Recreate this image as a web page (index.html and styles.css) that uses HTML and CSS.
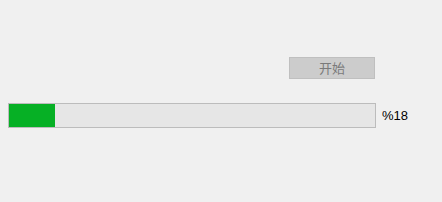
FILE: index.html
```html
<!DOCTYPE html>
<html lang="zh-CN">
<head>
    <meta charset="UTF-8">
    <title>进度</title>
    <link rel="stylesheet" href="styles.css">
</head>
<body>
    <div class="window">
        <div class="button-row">
            <button class="start-btn" disabled>开始</button>
        </div>
        <div class="progress-row">
            <div class="progress-track">
                <div class="progress-fill" style="width: 46px"></div>
            </div>
            <span class="progress-label">%18</span>
        </div>
    </div>
</body>
</html>
```

FILE: styles.css
```css
body {
    margin: 0;
    background-color: #f0f0f0;
    font-family: "Segoe UI", "Liberation Sans", "Noto Sans CJK SC", sans-serif;
    font-size: 12px;
}

.window {
    width: 442px;
    height: 202px;
    padding-top: 57px;
    box-sizing: border-box;
}

.button-row {
    display: flex;
    padding-left: 289px;
}

.start-btn {
    width: 86px;
    height: 22px;
    background-color: #cccccc;
    border: 1px solid #bfbfbf;
    color: #7a7a7a;
    font-family: "Noto Sans CJK SC", sans-serif;
    font-size: 13px;
    padding: 0;
    line-height: 20px;
}

.progress-row {
    display: flex;
    align-items: center;
    margin-top: 24px;
    padding-left: 8px;
}

.progress-track {
    width: 366px;
    height: 23px;
    border: 1px solid #bcbcbc;
    background-color: #e6e6e6;
}

.progress-fill {
    height: 100%;
    background-color: #06b025;
}

.progress-label {
    margin-left: 6px;
    color: #000;
    font-size: 13px;
}
```
